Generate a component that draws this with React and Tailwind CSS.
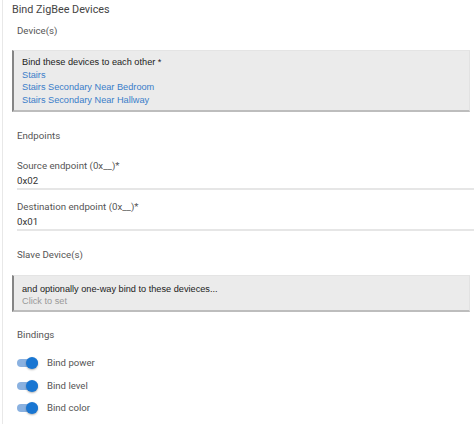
const Toggle = ({ label }) => (
  <div className="flex h-[22.5px] items-center">
    <div className="relative ml-[14px] h-[8px] w-[21px] rounded-full bg-[#8ab1e0]">
      <div className="absolute right-0 top-1/2 h-[12px] w-[12px] -translate-y-1/2 rounded-full bg-[#1976d2] shadow-[0_1px_2px_rgba(0,0,0,0.3)]" />
    </div>
    <span className="ml-[9px] text-[9.6px] text-[#555]">{label}</span>
  </div>
)

const Label = ({ children, className = "" }) => (
  <div className={`ml-[14px] h-[18px] text-[9.7px] leading-[18px] text-[#555] ${className}`}>
    {children}
  </div>
)

const Field = ({ label, value, className = "" }) => (
  <div className={`ml-[14px] ${className}`}>
    <div className="h-[16px] text-[9.7px] leading-[16px] text-[#555]">{label}</div>
    <div className="h-[16px] border-b-2 border-[#e6e6e6] text-[9.7px] leading-[14px] text-[#333]">
      {value}
    </div>
  </div>
)

export default function App() {
  const devices = [
    "Stairs",
    "Stairs Secondary Near Bedroom",
    "Stairs Secondary Near Hallway"
  ]

  return (
    <div className="h-[424px] w-[474px] overflow-hidden bg-white pl-[2px] font-['Roboto',sans-serif]">
      <div className="h-full border-l border-[#e8e8e8]">
        <div className="ml-[9px] h-[18px] pt-[1px] text-[10.8px] leading-[18px] text-[#444]">
          Bind ZigBee Devices
        </div>
        <Label className="mt-[4px]">Device(s)</Label>

        {/* device picker */}
        <div className="ml-[9px] mr-[4px] mt-[10px] border-b-2 border-l-2 border-r border-t border-b-[#bdbdbd] border-l-[#858585] border-r-[#e2e2e2] border-t-[#e4e4e4] bg-[#ebebeb] pb-[4px] pl-[8px] pt-[5px] font-['Liberation_Sans',sans-serif] text-[9.2px] leading-[12.5px]">
          <div className="text-[#222]">Bind these devices to each other *</div>
          {devices.map((d) => (
            <div key={d} className="text-[#3a7dc9]">
              {d}
            </div>
          ))}
        </div>

        <Label className="mt-[15px]">Endpoints</Label>
        <Field className="mt-[13px]" label="Source endpoint (0x__)*" value="0x02" />
        <Field className="mt-[9px]" label="Destination endpoint (0x__)*" value="0x01" />

        <Label className="mt-[15px]">Slave Device(s)</Label>

        <div className="ml-[9px] mr-[4px] mt-[11px] border-b-2 border-l-2 border-r border-t border-b-[#bdbdbd] border-l-[#858585] border-r-[#e2e2e2] border-t-[#e4e4e4] bg-[#ebebeb] pb-[3px] pl-[8px] pt-[7px] font-['Liberation_Sans',sans-serif] text-[9.2px] leading-[12px]">
          <div className="text-[#222]">and optionally one-way bind to these devieces...</div>
          <div className="text-[#999]">Click to set</div>
        </div>

        <Label className="mt-[14px]">Bindings</Label>
        <div className="mt-[8px]">
          <Toggle label="Bind power" />
          <Toggle label="Bind level" />
          <Toggle label="Bind color" />
        </div>
      </div>
    </div>
  )
}
